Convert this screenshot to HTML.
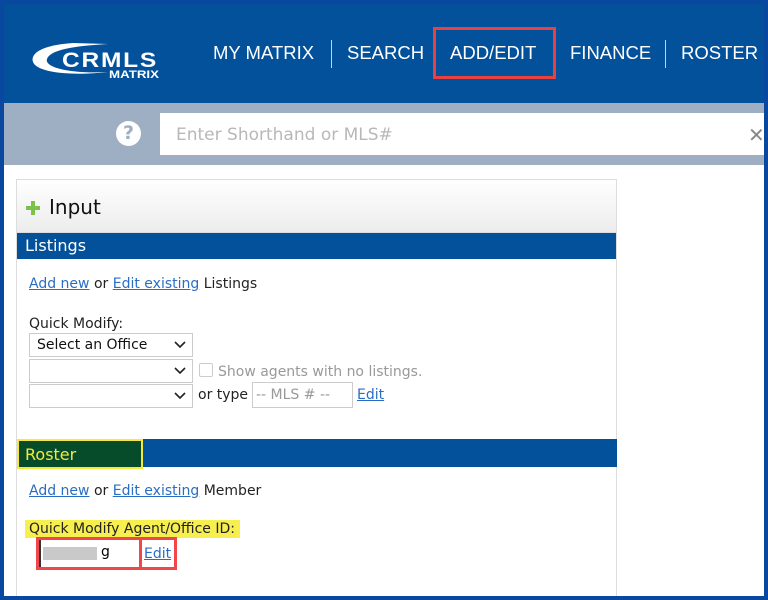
<!DOCTYPE html>
<html><head><style>
*{margin:0;padding:0;box-sizing:border-box}
body{width:768px;height:600px;overflow:hidden;background:#0a48a0;font-family:"DejaVu Sans","Liberation Sans",sans-serif;position:relative}
.a{position:absolute}
#frame{left:4px;top:4px;width:760px;height:592px;background:#fff;overflow:hidden}
.hdr{left:0;top:0;width:760px;height:99px;background:#03519a}
.nav{color:#fff;font-family:"Liberation Sans",sans-serif;font-size:18.5px;top:38px}
.sep{width:1px;height:28px;background:#c8d4e6;top:36px}
.band{left:0;top:99px;width:760px;height:62px;background:#9eafc3}
.t{font-size:14px;color:#222}
.lnk{color:#2a6ec3;text-decoration:underline}
.bar{background:#03519a;color:#fff;font-size:16px;height:26px;padding:3px 0 0 8px}
.sel{border:1px solid #ccc;background:#fff;height:24px;font-size:14px;color:#111;padding:3px 0 0 7px}
.chev{position:absolute;right:6px;top:7px}
</style></head><body>
<div id="frame" class="a">
<div class="a hdr"></div>
<svg class="a" style="left:24px;top:36px" width="140" height="40" viewBox="0 0 140 40">
<path d="M45 3 C15 5 2 13 5 22 C9 33 45 36 80 32 C45 34 16 28 19 19 C22 10 45 6 80 4 Z" fill="#fff"/>
<text x="34" y="27" font-family="Liberation Sans,sans-serif" font-weight="bold" font-size="21" fill="#fff" letter-spacing="1.5" textLength="96" lengthAdjust="spacingAndGlyphs">CRMLS</text>
<text x="81" y="38" font-family="Liberation Sans,sans-serif" font-weight="bold" font-size="11" fill="#fff" textLength="50" lengthAdjust="spacingAndGlyphs">MATRIX</text>
</svg>
<div class="a nav" style="left:209px">MY MATRIX</div>
<div class="a sep" style="left:327px"></div>
<div class="a nav" style="left:343px">SEARCH</div>
<div class="a" style="left:429px;top:23px;width:123px;height:52px;border:3px solid #e8413f"></div>
<div class="a nav" style="left:446px">ADD/EDIT</div>
<div class="a nav" style="left:566px">FINANCE</div>
<div class="a sep" style="left:661px"></div>
<div class="a nav" style="left:677px">ROSTER</div>
<div class="a band"></div>
<div class="a" style="left:112px;top:117px;width:25px;height:25px;border-radius:50%;background:#fff;color:#9eafc3;font-weight:bold;font-size:19px;text-align:center;line-height:25px">?</div>
<div class="a" style="left:156px;top:109px;width:604px;height:42px;background:#fff;color:#b8b8b8;font-size:17px;padding:12px 0 0 16px">Enter Shorthand or MLS#</div>
<div class="a" style="left:744px;top:119px;color:#888;font-size:20px">✕</div>
<div class="a" style="left:12px;top:175px;width:601px;height:430px;border:1px solid #ddd">
<div style="height:53px;background:linear-gradient(#fff,#ececec);border-bottom:1px solid #ddd;font-size:20px;color:#111;padding:15px 0 0 32px;position:relative">Input<svg style="position:absolute;left:9px;top:21px" width="14" height="14" viewBox="0 0 14 14"><path d="M5 0h4v5h5v4H9v5H5V9H0V5h5z" fill="#7cc24a"/></svg></div>
<div class="bar">Listings</div>
<div class="t" style="position:absolute;left:12px;top:96px"><span class="lnk">Add new</span> or <span class="lnk">Edit existing</span> Listings</div>
<div class="t" style="position:absolute;left:12px;top:136px">Quick Modify:</div>
<div class="sel" style="position:absolute;left:12px;top:153px;width:164px">Select an Office<svg class="chev" width="12" height="8"><path d="M1 1l5 5 5-5" stroke="#222" stroke-width="1.6" fill="none"/></svg></div>
<div class="sel" style="position:absolute;left:12px;top:179px;width:164px"><svg class="chev" width="12" height="8"><path d="M1 1l5 5 5-5" stroke="#222" stroke-width="1.6" fill="none"/></svg></div>
<div class="sel" style="position:absolute;left:12px;top:204px;width:164px"><svg class="chev" width="12" height="8"><path d="M1 1l5 5 5-5" stroke="#222" stroke-width="1.6" fill="none"/></svg></div>
<div style="position:absolute;left:182px;top:183px;width:14px;height:14px;border:1px solid #ccc;border-radius:2px"></div>
<div style="position:absolute;left:201px;top:184px;font-size:14px;color:#999">Show agents with no listings.</div>
<div class="t" style="position:absolute;left:181px;top:207px">or type</div>
<div style="position:absolute;left:235px;top:202px;width:101px;height:26px;border:1px solid #ccc;font-size:14px;color:#999;padding:4px 0 0 3px">-- MLS # --</div>
<div class="t lnk" style="position:absolute;left:340px;top:207px">Edit</div>
<div class="bar" style="position:absolute;left:0;top:259px;width:600px;height:28px"></div>
<div style="position:absolute;left:0;top:259px;width:126px;height:30px;background:#064c2b;border:2px solid #f5ea3a;color:#f5ea3a;font-size:16px;padding:4px 0 0 6px">Roster</div>
<div class="t" style="position:absolute;left:12px;top:303px"><span class="lnk">Add new</span> or <span class="lnk">Edit existing</span> Member</div>
<div class="t" style="position:absolute;left:8px;top:340px;background:#f7ef50;padding:1px 5px 1px 4px">Quick Modify Agent/Office ID:</div>
<div style="position:absolute;left:19px;top:357px;width:141px;height:33px;border:3px solid #f1474a"></div>
<div style="position:absolute;left:122px;top:360px;width:3px;height:27px;background:#f1474a"></div>
<div style="position:absolute;left:22px;top:360px;width:100px;height:27px;border-left:2px solid #333;font-size:14px;padding:4px 0 0 60px">g<span style="position:absolute;left:2px;top:7px;width:54px;height:13px;background:#c9c9c9"></span></div>
<div class="t lnk" style="position:absolute;left:127px;top:366px">Edit</div>
</div>
</div>
</body></html>
